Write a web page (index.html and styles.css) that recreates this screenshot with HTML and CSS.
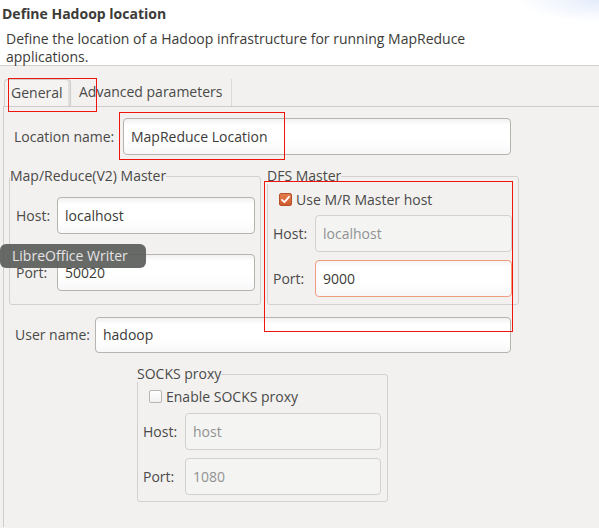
FILE: index.html
```html
<!DOCTYPE html>
<html>
<head>
<meta charset="utf-8">
<link rel="stylesheet" href="styles.css">
</head>
<body>
<div class="dialog">
  <header class="banner">
    <h1 class="title">Define Hadoop location</h1>
    <p class="desc">Define the location of a Hadoop infrastructure for running MapReduce<br>applications.</p>
  </header>
  <div class="tabs">
    <div class="tab active">General</div>
    <div class="tab">Advanced parameters</div>
  </div>
  <div class="panel">
    <div class="row loc">
      <span class="lbl">Location name:</span>
      <div class="input">MapReduce Location</div>
    </div>
    <div class="masters">
      <fieldset class="group mr">
        <legend>Map/Reduce(V2) Master</legend>
        <div class="grid">
          <span class="lbl">Host:</span><div class="input">localhost</div>
          <span class="lbl">Port:</span><div class="input">50020</div>
        </div>
      </fieldset>
      <fieldset class="group dfs">
        <legend>DFS Master</legend>
        <div class="check-row">
          <span class="box checked"><svg viewBox="0 0 13 13" width="13" height="13"><path d="M3 6.8 L5.4 9.2 L10 3.8" fill="none" stroke="#fff" stroke-width="1.8" stroke-linecap="round" stroke-linejoin="round"/></svg></span>
          <span class="check-lbl">Use M/R Master host</span>
        </div>
        <div class="grid tight">
          <span class="lbl">Host:</span><div class="input disabled">localhost</div>
          <span class="lbl">Port:</span><div class="input focused">9000</div>
        </div>
      </fieldset>
    </div>
    <div class="row user">
      <span class="lbl">User name:</span>
      <div class="input">hadoop</div>
    </div>
    <fieldset class="group socks">
      <legend>SOCKS proxy</legend>
      <div class="check-row">
        <span class="box"></span>
        <span class="check-lbl">Enable SOCKS proxy</span>
      </div>
      <div class="grid tight">
        <span class="lbl">Host:</span><div class="input disabled">host</div>
        <span class="lbl">Port:</span><div class="input disabled">1080</div>
      </div>
    </fieldset>
  </div>

  <div class="tooltip">LibreOffice Writer</div>
  <div class="mark m1"></div>
  <div class="mark m2"></div>
  <div class="mark m3"></div>
</div>
</body>
</html>
```

FILE: styles.css
```css
html, body {
  margin: 0;
  padding: 0;
}
body {
  width: 599px;
  height: 528px;
  overflow: hidden;
  background: #f2f1f0;
  font-family: "Open Sans", "Noto Sans", sans-serif;
  font-size: 14px;
  color: #4a4a48;
}
.dialog {
  position: relative;
  width: 599px;
  height: 528px;
}
.banner {
  height: 66px;
  box-sizing: border-box;
  background: radial-gradient(ellipse 80px 22px at 100% 0%, rgba(222, 232, 250, 0.8), rgba(255,255,255,0) 100%), #ffffff;
  border-bottom: 1px solid #d4d2cf;
  padding: 4px 0 0 2px;
}
.title {
  margin: 0;
  font-size: 14px;
  font-weight: bold;
  line-height: 20px;
  color: #3c3b37;
}
.desc {
  margin: 6px 0 0 4px;
  line-height: 18px;
  color: #3c3b37;
}
.tabs {
  display: flex;
  height: 40px;
  box-sizing: border-box;
  padding: 13px 0 0 4px;
}
.tab {
  height: 27px;
  box-sizing: border-box;
  padding: 4px 8px 0 8px;
  line-height: 18px;
  color: #4a4a48;
}
.tab.active {
  width: 67px;
  padding-left: 6px;
  border: 1px solid #cfcdca;
  border-bottom: none;
  border-radius: 4px 4px 0 0;
  background: #f4f3f2;
  box-shadow: inset -2px 0 0 #e2e0de;
}
.tab:not(.active) {
  width: 161px;
  border-right: 1px solid #dcdad7;
}
.panel {
  margin-left: 3px;
  border-left: 1px solid #cfcdca;
  border-top: 1px solid #cfcdca;
  height: 421px;
  padding-top: 11px;
  box-sizing: border-box;
}
.row {
  display: flex;
  align-items: center;
  padding-right: 88px;
}
.row .input { flex: 1; }
.loc .lbl { width: 109px; padding-left: 10px; flex: none; }
.user { margin-top: 12px; }
.user .lbl { width: 80px; padding-left: 11px; flex: none; }
.user .input { height: 36px; line-height: 34px; }
.lbl {
  line-height: 18px;
  color: #4a4a48;
}
.input {
  height: 37px;
  box-sizing: border-box;
  border: 1px solid #b7b4b0;
  border-radius: 4px;
  background: linear-gradient(#f1f1f1, #ffffff 6px, #ffffff 60%, #f8f8f8);
  padding: 0 7px;
  line-height: 35px;
  color: #3c3b37;
}
.input.disabled {
  background: #f4f4f3;
  border-color: #d3d1ce;
  color: #929292;
}
.input.focused {
  border-color: #ef9d7c;
  background: linear-gradient(#f4f4f4, #ffffff 6px, #ffffff 60%, #f8f8f8);
}
.masters {
  display: flex;
  gap: 6px;
  margin: 13px 0 0 5px;
}
.group {
  margin: 0;
  border: 1px solid #d3d1ce;
  border-radius: 3px;
  padding: 0;
  box-sizing: border-box;
  min-width: 0;
}
.group legend {
  padding: 0;
  margin-left: -5px;
  line-height: 16px;
  color: #4a4a48;
}
.mr {
  width: 252px;
  padding: 13px 5px 12px 6px;
}
.mr legend { margin-left: -6px; }
.dfs {
  width: 252px;
  padding: 8px 6px 7px 5px;
}
.dfs legend { margin-left: -6px; }
.grid {
  display: grid;
  grid-template-columns: 41px 1fr;
  row-gap: 20px;
  align-items: center;
}
.dfs .grid { grid-template-columns: 42px 1fr; }
.grid.tight { row-gap: 8px; }
.check-row {
  display: flex;
  align-items: center;
  height: 15px;
  margin: 0 0 8px 6px;
}
.box {
  width: 13px;
  height: 13px;
  box-sizing: border-box;
  border: 1px solid #b8b6b2;
  border-radius: 2px;
  background: linear-gradient(#ffffff, #f1f1f1);
  flex: none;
  display: flex;
}
.box.checked {
  border-color: #b4512a;
  background: linear-gradient(#e57c4c, #cf5b2c);
}
.box svg { margin: -1px; }
.check-lbl {
  margin-left: 4px;
  line-height: 18px;
  color: #4a4a48;
}
.socks {
  width: 251px;
  margin: 13px 0 0 133px;
  padding: 7px 6px 6px 5px;
}
.socks legend { margin-left: -6px; }
.socks .check-row { margin-left: 6px; margin-bottom: 9px; }
.socks .grid { grid-template-columns: 42px 1fr; }

.tooltip {
  position: absolute;
  left: 0;
  top: 244px;
  width: 146px;
  height: 24px;
  box-sizing: border-box;
  border-radius: 6px;
  background: rgba(88, 90, 88, 0.9);
  color: #e4e4e4;
  padding-left: 12px;
  line-height: 24px;
}
.mark {
  position: absolute;
  border: 1px solid #f0140c;
  box-sizing: border-box;
}
.m1 { left: 8px; top: 78px; width: 89px; height: 34px; }
.m2 { left: 119px; top: 112px; width: 166px; height: 48px; }
.m3 { left: 264px; top: 181px; width: 249px; height: 151px; }
```
